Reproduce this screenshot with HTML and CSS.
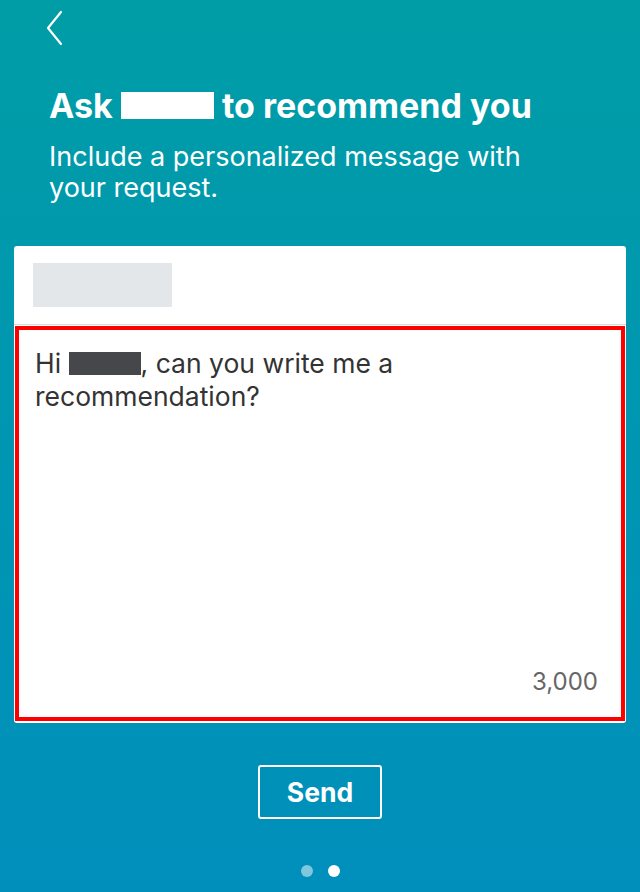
FILE: index.html
```html
<!DOCTYPE html>
<html lang="en">
<head>
  <meta charset="UTF-8">
  <title>Ask for a recommendation</title>
  <link rel="stylesheet" href="styles.css">
</head>
<body>

  <div class="screen">
    <button class="back-button" aria-label="Back">
      <svg width="18" height="36" viewBox="0 0 18 36">
        <polyline points="15,2 2,18 15,34" fill="none" stroke="#fff" stroke-width="2.2" stroke-linecap="round" stroke-linejoin="round"/>
      </svg>
    </button>

    <div class="intro">
      <h1>Ask <span class="name-hidden"></span> to recommend you</h1>
      <p class="subtitle">Include a personalized message with your request.</p>
    </div>

    <div class="card">
      <div class="card-head">
        <div class="placeholder"></div>
      </div>
      <div class="message">
        <p class="message-text">Hi <span class="name-dark"></span>, can you write me a recommendation?</p>
        <div class="count">3,000</div>
      </div>
    </div>

    <div class="actions">
      <button class="send-button">Send</button>
    </div>

    <div class="dots">
      <span class="dot"></span>
      <span class="dot active"></span>
    </div>
  </div>

</body>
</html>
```

FILE: styles.css
```css
html, body {
  margin: 0;
  padding: 0;
}

body {
  font-family: Inter, "Noto Sans", "Liberation Sans", sans-serif;
  background: linear-gradient(180deg, #009da6 0%, #0096b2 50%, #008fbb 100%);
  min-height: 892px;
  color: #fff;
}

.screen {
  width: 640px;
  height: 892px;
  padding: 0 14px;
  box-sizing: border-box;
  display: flex;
  flex-direction: column;
}

.back-button {
  align-self: flex-start;
  background: transparent;
  border: none;
  padding: 0;
  margin: 10px 0 0 32px;
  width: 18px;
  height: 36px;
  cursor: pointer;
}

.back-button svg {
  display: block;
}

.intro {
  padding-left: 35px;
  margin-top: 40px;
}

h1 {
  margin: 0;
  font-size: 34px;
  line-height: 40px;
  font-weight: 700;
}

.name-hidden {
  display: inline-block;
  width: 93px;
  height: 27px;
  background: #fff;
  vertical-align: -1px;
}

.subtitle {
  margin: 15px 0 0;
  font-size: 27px;
  line-height: 31px;
  width: 490px;
}

.card {
  margin-top: 43px;
  background: #fff;
  border-radius: 3px;
  padding-bottom: 2px;
}

.card-head {
  height: 79px;
  padding: 17px 0 0 19px;
  box-sizing: border-box;
  border-bottom: 1px solid #d9dbde;
}

.placeholder {
  width: 139px;
  height: 44px;
  background: #e4e7ea;
}

.message {
  margin: 1px 1px 0;
  height: 395px;
  box-sizing: border-box;
  border: 4px solid #ff0000;
  padding: 17px 23px 20px 16px;
  display: flex;
  flex-direction: column;
  color: #333;
}

.message-text {
  margin: 0;
  font-size: 26.5px;
  line-height: 33px;
  width: 420px;
}

.name-dark {
  display: inline-block;
  width: 72px;
  height: 23px;
  background: #45474b;
  vertical-align: -2px;
}

.count {
  margin-top: auto;
  text-align: right;
  font-size: 24px;
  line-height: 30px;
  color: #666;
}

.actions {
  display: flex;
  justify-content: center;
  margin-top: 42px;
}

.send-button {
  width: 124px;
  height: 54px;
  background: transparent;
  border: 2px solid #fff;
  border-radius: 3px;
  color: #fff;
  font-family: inherit;
  font-size: 26.5px;
  font-weight: 700;
  cursor: pointer;
}

.dots {
  display: flex;
  justify-content: center;
  gap: 15px;
  margin-top: 46px;
}

.dot {
  width: 12px;
  height: 12px;
  border-radius: 50%;
  background: rgba(255, 255, 255, 0.5);
}

.dot.active {
  background: #fff;
}
```
